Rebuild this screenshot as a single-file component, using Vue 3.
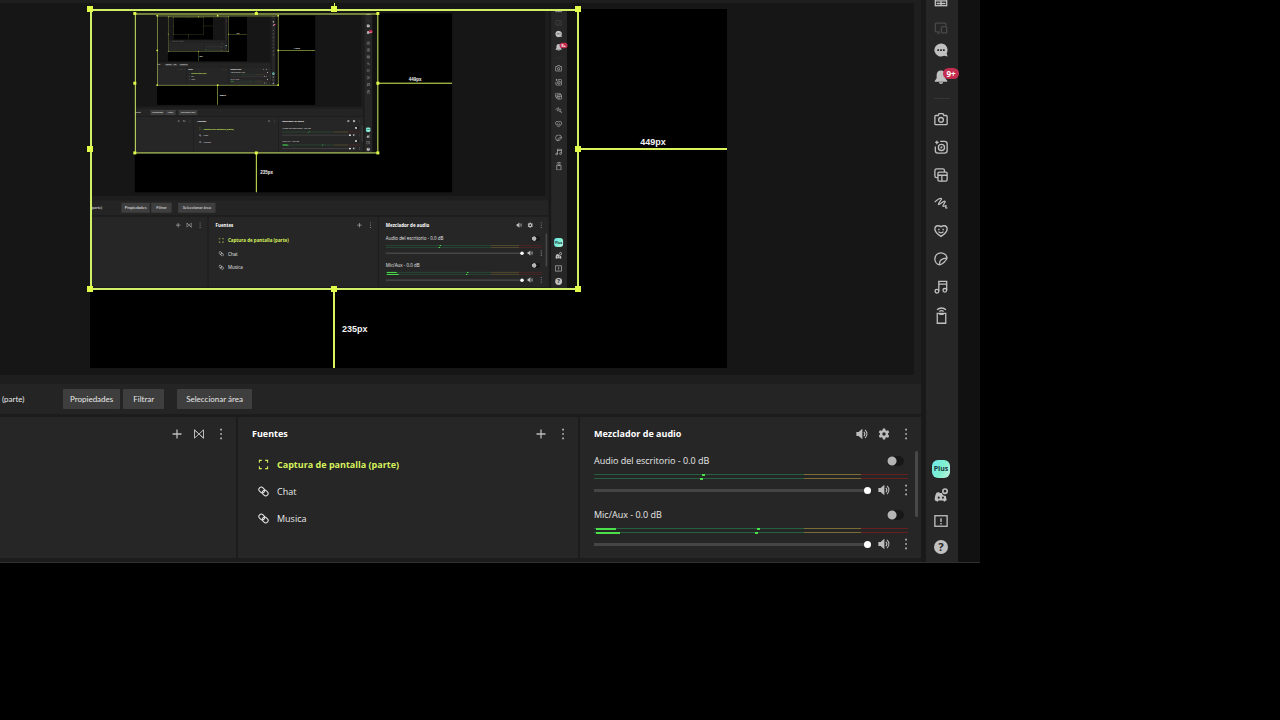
<script setup>
import { computed, useId } from 'vue'

defineOptions({ name: 'StudioScreen' })

const props = defineProps({ depth: { type: Number, default: 0 } })

const maxDepth = 4
const uid = useId()
const nested = computed(() => props.depth > 0)

const icons = {
  layout: '<rect x="1.5" y="1.5" width="13" height="13"/><path d="M1.5 9h13M8 9v5.500M3 12h10"/>',
  screens: '<path d="M6.500 12.500H2.500a1 1 0 0 1-1-1v-8a1 1 0 0 1 1-1h10a1 1 0 0 1 1 1v2"/><rect x="8.500" y="6.500" width="6" height="7" rx="1"/><path d="M4 14h3"/>',
  chat: '<path class="solid" d="M8 0.500a7.500 7.500 0 1 0 3.500 14.100l4 .9-1-3.800A7.500 7.500 0 0 0 8 .5z"/><path class="cut" d="M3.800 7h2v2h-2zM7 7h2v2H7zM10.200 7h2v2h-2z"/>',
  bell: '<path class="solid" d="M8 .5c-3.300 0-5 2.300-5 5.200V9.500L.8 12.500v.8h14.400v-.8L13 9.500V5.700C13 2.800 11.300.5 8 .5zM5.500 14h5c-.3 1.200-1.200 2-2.500 2s-2.200-.8-2.500-2z"/>',
  camera: '<path d="M2 4h2.800l1-2.200h4.400l1 2.200H14a1 1 0 0 1 1 1v8.500a1 1 0 0 1-1 1H2a1 1 0 0 1-1-1V5a1 1 0 0 1 1-1z"/><circle cx="8" cy="9" r="2.700"/>',
  aiCamera: '<path d="M7 1.500H12a3 3 0 0 1 3 3V12a3 3 0 0 1-3 3H4.500a3 3 0 0 1-3-3V7.500"/><circle cx="8.500" cy="8.500" r="3.500"/><path d="M7.500 9.500l2-2M3.300.8v4M1.300 2.800h4"/>',
  windows: '<path d="M4.500 11H3a2 2 0 0 1-2-2V3a2 2 0 0 1 2-2h7a2 2 0 0 1 2 2v1.500"/><rect x="4.500" y="4.700" width="10.500" height="10.300" rx="1.500"/><path d="M4.500 8.300H15M9 8.300V15"/>',
  scribble: '<path d="M.8 7C3.500 4.500 6.800 2.500 8.300 2.900 10 3.500 4.200 8.300 5 9.600c1 1.300 5.800-4.600 7.500-3.600 1.500 1-3.300 4.600-2.300 5.700 1 .9 2.500-1.200 3.500-.7.900.600-.900 1.800-.3 2.600.5.500 1.300.2 1.900-.3" stroke-width="1.400"/>',
  heart: '<path d="M8 14.200C4.500 12 1 9.200 1 5.800 1 3.500 2.600 2 4.600 2 6 2 7.300 2.600 8 3.200 8.700 2.600 10 2 11.400 2 13.400 2 15 3.500 15 5.800c0 3.400-3.500 6.200-7 8.400z"/><path d="M5.500 5.500v1.500M10.500 5.500v1.500M5.200 8.700c1.500 1.800 4.100 1.800 5.600 0"/>',
  sticker: '<path d="M6.500 14.800A7 7 0 1 1 14.900 7C13.800 10 9.800 14 6.500 14.800zM6.500 14.800C5.500 10 8.500 7 14.900 7"/>',
  music: '<path d="M5.500 12.500V1.500h9v10M5.500 4.800h9"/><circle cx="3.400" cy="12.800" r="2.100"/><circle cx="12.400" cy="11.800" r="2.100"/>',
  remote: '<path d="M4 6h8v9.300H4zM6.500 6v1h3V6M3.800 2.600c2.400-2.200 6-2.200 8.400 0M6 4.200c1.200-.9 2.800-.9 4 0" stroke-width="1.200"/>',
  discord: '<path class="solid" d="M2.800 5.500 5.800 4.500l.7 1.200h2.500C9.500 8 11 9 13.500 9l1 5-3 1.800-1-1.500H5.200l-1 1.500L.8 14c0-3 .6-6 2-8.500z"/><circle class="cut" cx="5.400" cy="11" r="1.200"/><circle class="cut" cx="10.200" cy="11" r="1.200"/><circle cx="12.600" cy="3.600" r="2.500" stroke-width="1.800"/>',
  alert: '<rect x="1" y="2" width="14" height="12"/><path d="M8 4.800v4.400M8 10.400v1.600" stroke-width="1.600"/>',
  help: '<circle class="solid" cx="8" cy="8" r="8"/><text x="8" y="12.500" text-anchor="middle" class="mark">?</text>',
  plus: '<path d="M8 2v12M2 8h12" stroke-width="1.700"/>',
  dots: '<path class="solid" d="M7 1h2.200v2.200H7zM7 6.900h2.200v2.200H7zM7 12.800h2.200V15H7z"/>',
  mirror: '<path d="M2 2.500v11l12-11v11zM2 2.500l5 4.500M9 9l5 4.500" stroke-width="1.300"/>',
  frame: '<path d="M2 5.500V2h3.500M10.500 2H14v3.500M14 10.500V14h-3.500M5.500 14H2v-3.500" stroke-width="1.500"/>',
  link: '<rect x="1" y="2.300" width="9" height="7" rx="3.500" transform="rotate(45 5.500 5.800)"/><rect x="6" y="6.700" width="9" height="7" rx="3.500" transform="rotate(45 10.500 10.200)"/>',
  speaker: '<path class="solid" d="M.5 5.200h3L8.500 1v14l-5-4.200h-3z"/><path d="M10.500 5c1.500 1.700 1.500 4.300 0 6M12 2.500c3.400 3 3.400 8 0 11" stroke-width="1.400"/>',
  gear: '<path class="solid" fill-rule="evenodd" d="M6.500.8h3l.5 2.200 1.300.8 2.200-.8 1.500 2.700-1.700 1.500v1.600l1.700 1.500-1.500 2.700-2.200-.8-1.300.8-.5 2.200h-3L6 13l-1.300-.8-2.200.8L1 10.300l1.700-1.500V7.200L1 5.700 2.500 3l2.200.8L6 3zM8 5.700a2.300 2.300 0 1 0 0 4.600 2.300 2.300 0 0 0 0-4.600z"/>'
}

const notices = [
  { id: 'layout', label: 'Editor de diseño', cls: 'clipped' },
  { id: 'screens', label: 'Doble lienzo', cls: 'dim' },
  { id: 'chat', label: 'Chat', cls: 'short' },
  { id: 'bell', label: 'Notificaciones', cls: 'tall', badge: '9+' }
]
const tools = [
  { id: 'camera', label: 'Captura' },
  { id: 'aiCamera', label: 'Repetición' },
  { id: 'windows', label: 'Ventanas' },
  { id: 'scribble', label: 'Dibujar' },
  { id: 'heart', label: 'Reacciones' },
  { id: 'sticker', label: 'Pegatinas' },
  { id: 'music', label: 'Música' },
  { id: 'remote', label: 'Control remoto' }
]
const support = [
  { id: 'discord', label: 'Comunidad' },
  { id: 'alert', label: 'Informar' },
  { id: 'help', label: 'Ayuda' }
]
const sources = [
  { name: 'Captura de pantalla (parte)', icon: 'frame', active: true },
  { name: 'Chat', icon: 'link' },
  { name: 'Musica', icon: 'link' }
]
const channels = [
  { name: 'Audio del escritorio', bars: [{ level: 0, peak: 34.5 }, { level: 0, peak: 33.7 }] },
  { name: 'Mic/Aux', bars: [{ level: 6.5, peak: 52 }, { level: 7.5, peak: 51.2 }] }
]
const handles = ['nw', 'n', 'ne', 'w', 'e', 'sw', 's', 'se']
</script>

<template>
  <div class="page" :class="{ nested }">
    <div class="studio">
      <main class="main">
        <section class="preview" aria-label="Vista previa">
          <div class="pane">
            <div class="canvas">
              <div v-if="depth < maxDepth" class="capture" inert aria-hidden="true">
                <StudioScreen :depth="depth + 1" />
              </div>
              <div class="guide-x"><span>449px</span></div>
              <div class="guide-y"><span>235px</span></div>
              <div class="selection">
                <i class="stem"></i>
                <i v-for="h in handles" :key="h" class="handle" :class="h"></i>
              </div>
            </div>
          </div>
        </section>

        <div class="toolbar">
          <span class="current">(parte)</span>
          <button class="btn">Propiedades</button>
          <button class="btn filter">Filtrar</button>
          <button class="btn area">Seleccionar área</button>
        </div>

        <div class="panels">
          <section class="panel" aria-label="Escenas">
            <header class="head">
              <span class="title"></span>
              <button v-for="i in ['plus', 'mirror', 'dots']" :key="i" class="tool" :aria-label="i">
                <svg viewBox="0 0 16 16" v-html="icons[i]"></svg>
              </button>
            </header>
          </section>

          <section class="panel">
            <header class="head">
              <h2 class="title">Fuentes</h2>
              <button v-for="i in ['plus', 'dots']" :key="i" class="tool" :aria-label="i">
                <svg viewBox="0 0 16 16" v-html="icons[i]"></svg>
              </button>
            </header>
            <ul class="sources">
              <li v-for="s in sources" :key="s.name" :class="{ active: s.active }">
                <svg viewBox="0 0 16 16" v-html="icons[s.icon]"></svg>
                <span>{{ s.name }}</span>
              </li>
            </ul>
          </section>

          <section class="panel">
            <header class="head">
              <h2 class="title">Mezclador de audio</h2>
              <button v-for="i in ['speaker', 'gear', 'dots']" :key="i" class="tool" :aria-label="i">
                <svg viewBox="0 0 16 16" v-html="icons[i]"></svg>
              </button>
            </header>
            <div class="channels">
              <div v-for="(c, n) in channels" :key="c.name" class="channel">
                <div class="name-row">
                  <label :for="`${uid}-vol-${n}`">{{ c.name }} - 0.0 dB</label>
                  <input type="checkbox" class="switch" :aria-label="`Monitor ${c.name}`" />
                </div>
                <div class="meter">
                  <div v-for="(b, k) in c.bars" :key="k" class="bar">
                    <i class="level" :style="{ width: b.level + '%' }"></i>
                    <i class="peak" :style="{ left: b.peak + '%' }"></i>
                  </div>
                </div>
                <div class="volume">
                  <input :id="`${uid}-vol-${n}`" type="range" min="0" max="100" value="100" />
                  <button v-for="i in ['speaker', 'dots']" :key="i" class="tool" :aria-label="i">
                    <svg viewBox="0 0 16 16" v-html="icons[i]"></svg>
                  </button>
                </div>
              </div>
            </div>
            <div class="scroll"></div>
          </section>
        </div>
      </main>

      <aside class="sidebar">
        <nav aria-label="Herramientas">
          <button v-for="i in notices" :key="i.id" class="side" :class="i.cls" :aria-label="i.label">
            <svg viewBox="0 0 16 16" v-html="icons[i.id]"></svg>
            <span v-if="i.badge" class="badge">{{ i.badge }}</span>
          </button>
          <hr />
          <button v-for="i in tools" :key="i.id" class="side" :class="i.id" :aria-label="i.label">
            <svg viewBox="0 0 16 16" v-html="icons[i.id]"></svg>
          </button>
        </nav>
        <nav class="support" aria-label="Soporte">
          <button class="side"><span class="plus">Plus</span></button>
          <button v-for="i in support" :key="i.id" class="side" :aria-label="i.label">
            <svg viewBox="0 0 16 16" v-html="icons[i.id]"></svg>
          </button>
        </nav>
      </aside>
      <div class="edge"></div>
    </div>
  </div>
</template>

<style>
body {
  background: #000;
}
</style>

<style scoped>
.page {
  box-sizing: border-box;
  min-height: 100vh;
  padding-right: 300px;
  background: #000;
  color: #e8e8e8;
  font: 9px/14px "Open Sans", "Noto Sans", sans-serif;
  overflow: hidden;
}
.page.nested {
  width: 1280px;
  height: 720px;
  min-height: 0;
}
.page * {
  box-sizing: border-box;
}
button {
  margin: 0;
  padding: 0;
  border: 0;
  background: none;
  color: inherit;
  font: inherit;
}
svg {
  display: block;
  flex: none;
  fill: none;
  stroke: currentColor;
  stroke-width: 1.5;
}
svg :deep(.solid) {
  fill: currentColor;
  stroke: none;
}
svg :deep(.cut) {
  fill: #262626;
  stroke: none;
}
svg :deep(.mark) {
  fill: #262626;
  stroke: none;
  font: bold 13px "Open Sans", sans-serif;
}
.studio {
  display: flex;
  background: #1c1c1c;
  border-bottom: 1px solid #303030;
}
.main {
  flex: 1;
  min-width: 0;
}
.preview {
  padding: 3px 7px 9px 0;
  background: #1e1e1e;
}
.pane {
  padding: 6px 0 7px 90px;
  background: #161616;
}
.canvas {
  position: relative;
  width: 637px;
  aspect-ratio: 637 / 359;
  background: #000;
}
.capture {
  position: absolute;
  inset: 0;
  overflow: hidden;
}
.capture > .page {
  transform: scale(0.498);
  transform-origin: 0 0;
}
.selection {
  position: absolute;
  top: 0;
  left: 0;
  width: 489px;
  height: 281px;
  border: 2px solid #d2ef68;
}
.handle {
  position: absolute;
  width: 6px;
  height: 6px;
  background: #e2fb4a;
  transform: translate(-50%, -50%);
}
.nw, .w, .sw { left: -2px; }
.n, .s { left: calc(50% - 1px); }
.ne, .e, .se { left: calc(100% + 1px); }
.nw, .n, .ne { top: -2px; }
.w, .e { top: calc(50% - 1px); }
.sw, .s, .se { top: calc(100% + 1px); }
.stem {
  position: absolute;
  left: calc(50% - 1px);
  bottom: 100%;
  width: 1px;
  height: 8px;
  background: #e2fb4a;
}
.guide-x,
.guide-y {
  position: absolute;
  background: #d9f45c;
  color: #f4f4f4;
  font: bold 9px/12px "Liberation Sans", Arial, sans-serif;
}
.guide-x {
  top: 139px;
  left: 489px;
  right: 0;
  height: 2px;
  text-align: center;
}
.guide-y {
  top: 280px;
  bottom: 0;
  left: 243px;
  width: 2px;
}
.guide-x span {
  display: block;
  margin-top: -12px;
}
.guide-y span {
  position: absolute;
  top: 34px;
  left: 9px;
}
.toolbar {
  display: flex;
  align-items: center;
  height: 30px;
  background: #242424;
  font-family: Lato, "Open Sans", sans-serif;
  font-size: 8px;
}
.current {
  width: 61px;
  margin-left: 2px;
}
.btn {
  height: 20px;
  padding: 0 7px;
  border-radius: 1px;
  background: #3e3e3e;
}
.filter {
  margin-left: 3px;
  padding: 0 10px;
}
.area {
  margin-left: 13px;
  padding: 0 9px;
}
.panels {
  display: grid;
  grid-template-columns: 236fr 340fr 341fr;
  gap: 2px;
  padding: 3px 0 4px;
}
.panel {
  position: relative;
  min-height: 141px;
  background: #262626;
}
.head {
  display: flex;
  align-items: center;
  height: 33px;
  padding: 0 4px 0 14px;
}
.title {
  flex: 1;
  margin: 0;
  font-size: 9px;
  font-weight: 700;
  color: #fff;
}
.tool {
  display: flex;
  align-items: center;
  justify-content: center;
  width: 22px;
  height: 14px;
  color: #bdbdbd;
}
.tool svg {
  width: 12px;
  height: 12px;
}
.sources {
  margin: 0;
  padding: 1px 0 0 20px;
  list-style: none;
}
.sources li {
  display: flex;
  align-items: center;
  gap: 8px;
  height: 27px;
}
.sources svg {
  width: 11px;
  height: 11px;
}
.sources .active {
  color: #d6f25c;
  font-weight: 700;
}
.channels {
  display: grid;
  gap: 11px;
  padding: 4px 4px 0 14px;
}
.name-row {
  display: flex;
  align-items: center;
  justify-content: space-between;
  height: 14px;
  padding-right: 13px;
}
.switch {
  appearance: none;
  width: 17px;
  height: 10px;
  margin: 0;
  border-radius: 5px;
  background: radial-gradient(circle at 5px 5px, #b4b4b4 4px, transparent 5px) #171717;
}
.meter {
  display: grid;
  gap: 3px;
  margin: 6px 9px 4px 0;
}
.bar {
  position: relative;
  height: 1px;
  background: linear-gradient(90deg, #25603f 67%, #7a6c34 67% 85%, #662022 85%);
}
.level,
.peak {
  position: absolute;
  top: 0;
  left: 2px;
  height: 2px;
  background: #4be04b;
}
.peak {
  width: 3px;
}
.volume {
  display: flex;
  align-items: center;
  height: 14px;
}
.volume input {
  appearance: none;
  flex: 1;
  min-width: 0;
  height: 7px;
  margin: 0 2px 0 0;
  background: linear-gradient(#454545, #454545) center / 100% 3px no-repeat;
}
.volume input::-webkit-slider-thumb {
  appearance: none;
  width: 7px;
  height: 7px;
  border-radius: 50%;
  background: #fff;
}
.scroll {
  position: absolute;
  top: 34px;
  right: 3px;
  width: 3px;
  height: 66px;
  border-radius: 2px;
  background: #484848;
}
.sidebar {
  display: flex;
  flex-direction: column;
  justify-content: space-between;
  width: 37px;
  padding-bottom: 2px;
  border-left: 5px solid #191919;
  background: #262626;
}
.side {
  position: relative;
  display: flex;
  align-items: center;
  justify-content: center;
  width: 100%;
  height: 28px;
  padding-right: 2px;
  color: #c0c0c0;
}
.side svg {
  width: 14px;
  height: 14px;
}
.remote svg {
  width: 17px;
  height: 17px;
}
.clipped {
  align-items: flex-start;
  height: 16px;
}
.clipped svg {
  margin-top: -7px;
}
.dim {
  height: 24px;
  color: #484848;
}
.short {
  height: 20px;
}
.tall {
  height: 33px;
}
.badge {
  position: absolute;
  top: 8px;
  left: 17px;
  width: 16px;
  height: 11px;
  border-radius: 6px;
  background: #c22d50;
  color: #fff;
  font-size: 8px;
  font-weight: 700;
  line-height: 11px;
  text-align: center;
}
hr {
  width: 16px;
  height: 1px;
  margin: 5px auto 6px;
  border: 0;
  background: #363636;
}
.support .side {
  height: 26px;
}
.plus {
  width: 18px;
  height: 18px;
  border-radius: 6px;
  background: linear-gradient(115deg, #6ee8f0, #7ff0cf 55%, #c6f2e2);
  color: #16323a;
  font-size: 7px;
  font-weight: 700;
  line-height: 18px;
  text-align: center;
}
.edge {
  width: 22px;
  background: #111;
}
</style>
